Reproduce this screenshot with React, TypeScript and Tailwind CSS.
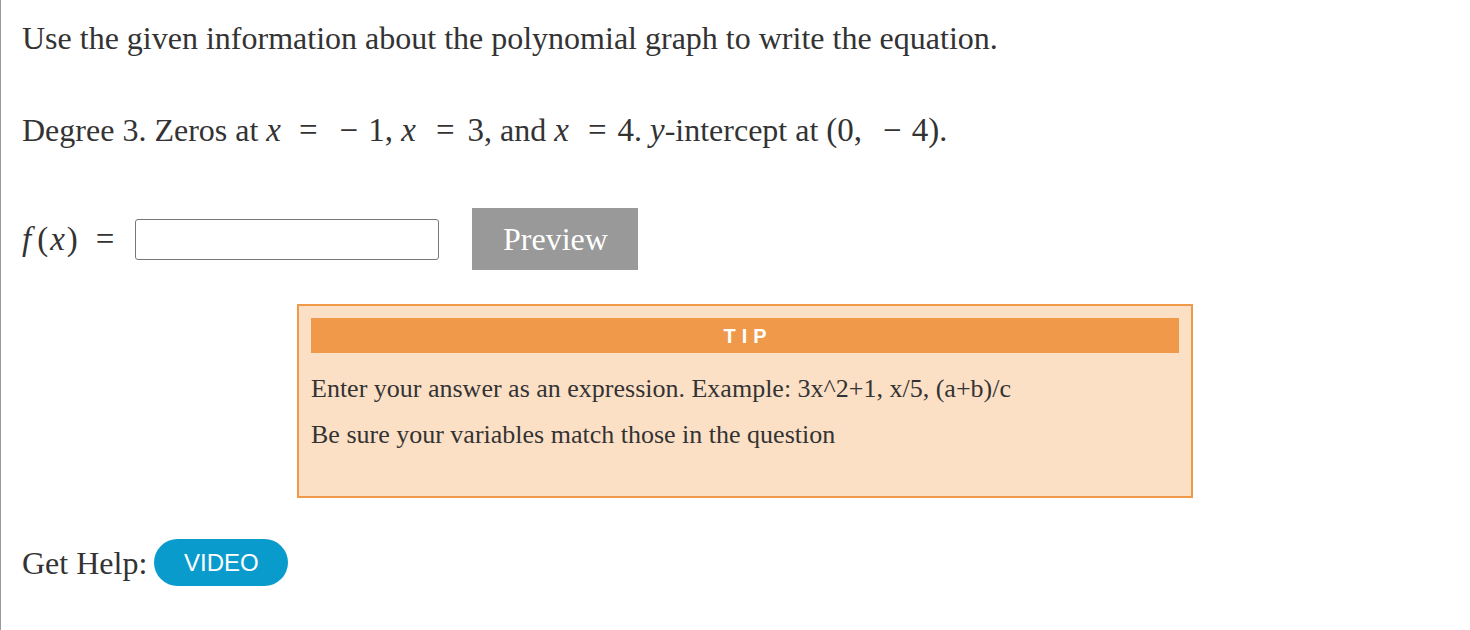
import React from "react";

const serif = { fontFamily: '"Liberation Serif", "Times New Roman", serif' };

function MI({ children }: { children: React.ReactNode }) {
  return <span className="italic" style={{ fontFamily: '"Liberation Serif", serif' }}>{children}</span>;
}

export default function App() {
  return (
    <div className="w-[1470px] h-[630px] bg-white border-l border-[#9a9a9a] text-[#333333] overflow-hidden" style={serif}>
      <div className="pl-[21px] pt-[19px]">
        <p className="text-[32px] leading-[38px]">Use the given information about the polynomial graph to write the equation.</p>
        <p className="text-[32px] leading-[38px] mt-[54px] whitespace-nowrap">
          Degree 3. Zeros at{" "}
          <span className="text-[33px]">
            <MI>x</MI>
            <span className="ml-[18px] mr-[22px]">=</span>
            <span className="mr-[10px]">−</span>1, <MI>x</MI>
            <span className="ml-[20px] mr-[13px]">=</span>3
          </span>
          , and{" "}
          <span className="text-[33px]">
            <MI>x</MI>
            <span className="ml-[19px] mr-[11px]">=</span>4
          </span>
          . <span className="text-[33px]"><MI>y</MI></span>-intercept at{" "}
          <span className="text-[33px]">
            (0,<span className="ml-[21px] mr-[10px]">−</span>4)
          </span>
          .
        </p>
        <div className="flex items-center mt-[59px]">
          <span className="text-[33px] leading-[38px] whitespace-nowrap">
            <MI>f</MI>
            <span className="ml-[6px]">(</span>
            <MI><span className="mx-[2px]">x</span></MI>)
            <span className="ml-[18px]">=</span>
          </span>
          <div className="ml-[21px] w-[304px] h-[41px] border border-[#777777] rounded-[3px] bg-white"></div>
          <div className="ml-[33px] w-[166px] h-[62px] bg-[#999999] text-white text-[32px] flex items-center justify-center">Preview</div>
        </div>
        <div className="ml-[275px] mt-[34px] w-[896px] h-[194px] border-2 border-[#f0994a] bg-[#fce0c6] p-[12px]">
          <div
            className="h-[35px] bg-[#f0994b] text-white text-[20px] font-bold tracking-[6px] pl-[6px] flex items-center justify-center"
            style={{ fontFamily: '"Liberation Sans", Arial, sans-serif' }}
          >
            TIP
          </div>
          <p className="text-[26px] leading-[30px] mt-[21px] whitespace-nowrap">Enter your answer as an expression. Example: 3x^2+1, x/5, (a+b)/c</p>
          <p className="text-[26px] leading-[30px] mt-[16px] whitespace-nowrap">Be sure your variables match those in the question</p>
        </div>
        <div className="flex items-center mt-[41px]">
          <span className="text-[32px] leading-[38px]">Get Help:</span>
          <div
            className="ml-[7px] w-[134px] h-[47px] rounded-full bg-[#0a9bcd] text-white text-[24px] flex items-center justify-center"
            style={{ fontFamily: '"Liberation Sans", Arial, sans-serif' }}
          >
            VIDEO
          </div>
        </div>
      </div>
    </div>
  );
}
